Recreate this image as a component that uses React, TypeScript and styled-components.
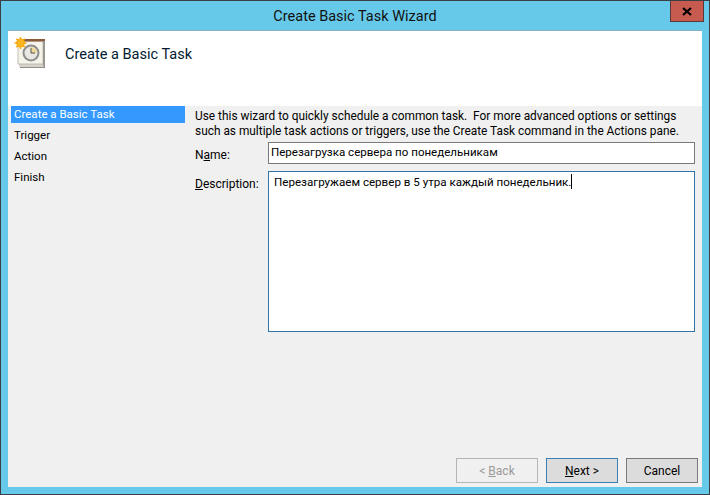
import React from "react";
import styled, { createGlobalStyle } from "styled-components";

const Global = createGlobalStyle`
  html, body { margin: 0; padding: 0; width: 710px; height: 495px; overflow: hidden; }
  body { font-family: Roboto, "Open Sans", sans-serif; font-size: 12px; color: #000; }
`;

const Window = styled.div`
  box-sizing: border-box; width: 710px; height: 495px; border: 1px solid #3a3f44;
  background: #67c9ea; display: flex; flex-direction: column; padding: 0 7px 7px;
`;
const TitleBar = styled.div`
  height: 30px; flex: none; position: relative; display: flex; align-items: center; justify-content: center;
  font-size: 14.5px; color: #111;
`;
const CloseButton = styled.div`
  position: absolute; right: -2px; top: 0; width: 34px; height: 21px; box-sizing: border-box;
  background: #c75b50; border: 1px solid #5a3a38; border-top: none; display: flex; align-items: center; justify-content: center;
`;
const Client = styled.div`
  flex: 1; min-height: 0; display: flex; flex-direction: column; background: #f0f0f0;
  box-shadow: 0 -1px 0 #86b4c6;
`;
const Header = styled.div`
  height: 75px; flex: none; background: #fff; display: flex; align-items: flex-start; padding: 6px 0 0 6px; box-sizing: border-box;
`;
const HeaderIcon = styled.svg`width: 32px; height: 32px; flex: none;`;
const HeaderTitle = styled.div`font-size: 14.55px; margin: 8px 0 0 19px; line-height: 20px; color: #001a33;`;
const Main = styled.div`flex: 1; min-height: 0; display: flex; padding-left: 3px;`;
const Sidebar = styled.div`width: 174px; flex: none; display: flex; flex-direction: column;`;
const Step = styled.div<{ $active?: boolean }>`
  height: 17px; line-height: 16px; padding-left: 3px; margin-bottom: 4px; font-size: 11.5px;
  background: ${(p) => (p.$active ? "#3399ff" : "transparent")};
  color: ${(p) => (p.$active ? "#fff" : "#000")};
`;
const Content = styled.div`flex: 1; min-width: 0; display: flex; flex-direction: column; padding: 3px 4px 4px 10px;`;
const Intro = styled.div`line-height: 15px; white-space: nowrap; font-size: 11.88px;`;
const FormRow = styled.div`display: flex; align-items: flex-start; margin: 3px 3px 0 0;`;
const DescRow = styled(FormRow)`margin-top: 7px;`;
const FieldLabel = styled.div`width: 73px; flex: none; line-height: 16px; padding-top: 5px;`;
const NameBox = styled.div`
  flex: 1; height: 22px; box-sizing: border-box; background: #fff; border: 1px solid #7a7a7a;
  padding-left: 2px; line-height: 19px; font-size: 11.55px;
`;
const DescBox = styled.div`
  flex: 1; height: 161px; box-sizing: border-box; background: #fff; border: 1px solid #2f75a8;
  padding: 2px 0 0 5px; line-height: 16px; white-space: nowrap; font-size: 11.6px;
`;
const Caret = styled.span`display: inline-block; width: 1px; height: 15px; background: #000; vertical-align: -3px;`;
const U = styled.span`text-decoration: underline;`;
const Spacer = styled.div`flex: 1;`;
const Footer = styled.div`display: flex; justify-content: flex-end; gap: 8px;`;
const Btn = styled.div<{ $kind?: "disabled" | "default" }>`
  height: 25px; box-sizing: border-box; display: flex; align-items: center; justify-content: center; white-space: pre;
  width: ${(p) => (p.$kind === "disabled" ? "82px" : "72px")};
  border: 1px solid ${(p) => (p.$kind === "disabled" ? "#b5b5b5" : p.$kind === "default" ? "#3a80b4" : "#7a7a7a")};
  background: ${(p) => (p.$kind === "disabled" ? "#f0f0f0" : "#dcdcdc")};
  color: ${(p) => (p.$kind === "disabled" ? "#9a9a9a" : "#000")};
`;

const Icon = () => (
  <HeaderIcon viewBox="0 0 32 32">
    <rect x="6" y="6" width="25" height="25" fill="#8f8d86" />
    <rect x="5" y="5" width="25" height="25" fill="#d6d3ca" />
    <rect x="4" y="4" width="25" height="23" fill="#f6f3ea" stroke="#b5b2a8" strokeWidth="0.8" />
    <rect x="4" y="2" width="27" height="2.5" fill="#8a5a3c" />
    <rect x="29" y="4" width="2" height="25" fill="#9a9890" />
    <circle cx="17" cy="16" r="7.5" fill="#e9e7e1" stroke="#8d8d8d" strokeWidth="2" />
    <path d="M17 10a6 6 0 0 1 6 6h-6z" fill="#f1d79a" />
    <path d="M17 11v5h4" fill="none" stroke="#555" strokeWidth="1" />
    <circle cx="6.5" cy="6" r="4.5" fill="#f9b61f" />
    <path d="M6.5 0v3M6.5 9v3M0.5 6h3M9.5 6h3M2.3 1.8l2 2M8.7 8.2l2 2M10.7 1.8l-2 2M4.3 8.2l-2 2" stroke="#f7a70f" strokeWidth="1.4" />
  </HeaderIcon>
);

export default function App() {
  return (
    <>
      <Global />
      <Window>
        <TitleBar>
          Create Basic Task Wizard
          <CloseButton>
            <svg width="10" height="9" viewBox="0 0 10 9"><path d="M1 1l8 7M9 1L1 8" stroke="#000" strokeWidth="2.2" /></svg>
          </CloseButton>
        </TitleBar>
        <Client>
          <Header>
            <Icon />
            <HeaderTitle>Create a Basic Task</HeaderTitle>
          </Header>
          <Main>
            <Sidebar>
              <Step $active>Create a Basic Task</Step>
              <Step>Trigger</Step>
              <Step>Action</Step>
              <Step>Finish</Step>
            </Sidebar>
            <Content>
              <Intro>
                Use this wizard to quickly schedule a common task.&nbsp; For more advanced options or settings<br />
                such as multiple task actions or triggers, use the Create Task command in the Actions pane.
              </Intro>
              <FormRow>
                <FieldLabel>N<U>a</U>me:</FieldLabel>
                <NameBox>Перезагрузка сервера по понедельникам</NameBox>
              </FormRow>
              <DescRow>
                <FieldLabel><U>D</U>escription:</FieldLabel>
                <DescBox>Перезагружаем сервер в 5 утра каждый понедельник.<Caret /></DescBox>
              </DescRow>
              <Spacer />
              <Footer>
                <Btn $kind="disabled">{"< "}<U>B</U>ack</Btn>
                <Btn $kind="default"><U>N</U>{"ext >"}</Btn>
                <Btn>Cancel</Btn>
              </Footer>
            </Content>
          </Main>
        </Client>
      </Window>
    </>
  );
}
